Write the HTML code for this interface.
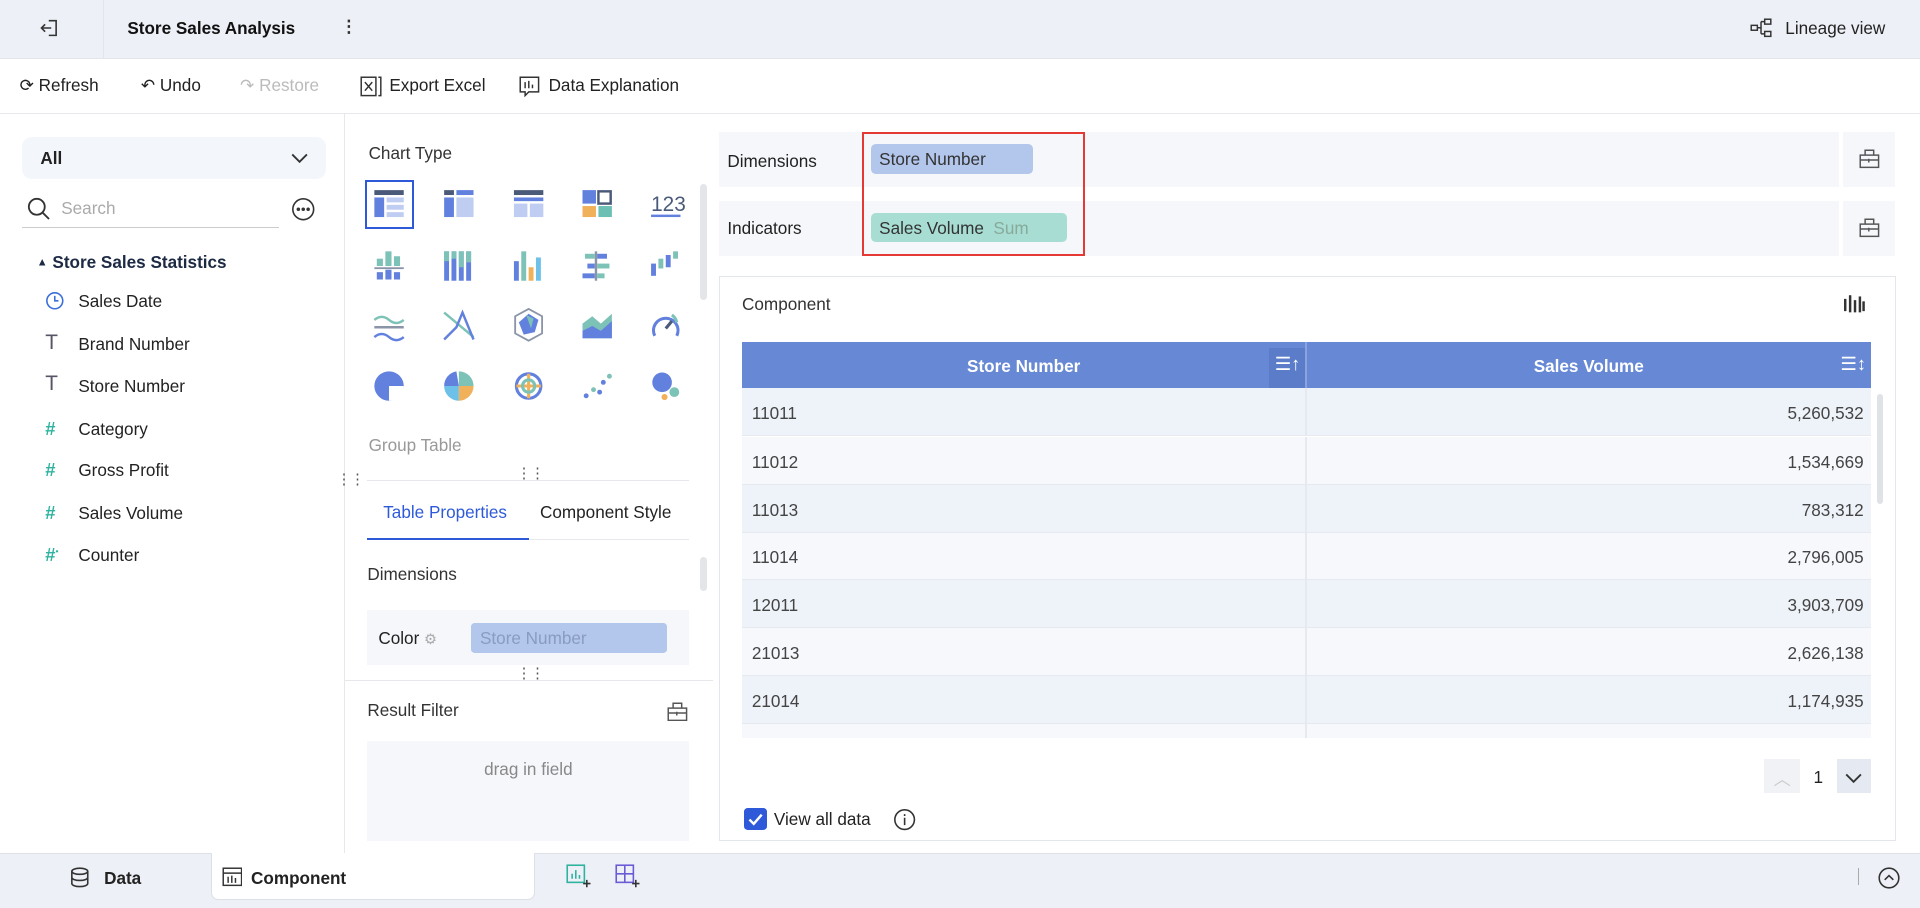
<!DOCTYPE html>
<html><head><meta charset="utf-8"><style>
*{box-sizing:border-box;margin:0;padding:0}
html,body{width:1920px;height:908px;overflow:hidden;background:#fff}
#r{width:1568px;height:742px;position:relative;zoom:1.2244898;font-family:"Liberation Sans",sans-serif;color:#222;font-size:14px}
.a{position:absolute}
.t{white-space:nowrap}
.fi{position:absolute;left:36px;font-size:14px;color:#222}
.ic{position:absolute;left:37px;color:#2fb3a0;font-size:15px;font-weight:bold}
.row{position:absolute;left:606px;width:922px;height:39px;border-bottom:1px solid #e6e9ef}
.row span{position:absolute;top:12px;font-size:14px;color:#444}
.row .n{right:6px}
.row b{position:absolute;display:block;left:460px;top:0;width:1px;height:39px;background:#e6e9ef}
</style></head><body><div id="r">
<!-- top bar -->
<div class="a" style="left:0;top:0;width:1568px;height:48px;background:#edf0f6;border-bottom:1px solid #e2e5ea"></div>
<div class="a" style="left:84px;top:0;width:1px;height:48px;background:#e2e5ea"></div>
<svg class="a" style="left:32px;top:14px" width="18" height="18" viewBox="0 0 18 18" fill="none" stroke="#333" stroke-width="1.3"><path d="M8 3h6v12H8M2 9h8M5 6L2 9l3 3"/></svg>
<div class="a t" style="left:104px;top:15px;font-weight:bold;font-size:14px;color:#111">Store Sales Analysis</div>
<div class="a t" style="left:278px;top:13px;font-weight:bold;color:#333">⋮</div>
<svg class="a" style="left:1429px;top:15px" width="20" height="16" viewBox="0 0 20 16" fill="none" stroke="#333" stroke-width="1.2"><rect x="1" y="6" width="5" height="4"/><rect x="12" y="1" width="5" height="4"/><rect x="12" y="11" width="5" height="4"/><path d="M6 8h3M9 3v10M9 3h3M9 13h3"/></svg>
<div class="a t" style="left:1458px;top:15px;font-size:14px">Lineage view</div>
<!-- toolbar -->
<div class="a" style="left:0;top:92px;width:1568px;height:1px;background:#e6e8ec"></div>
<div class="a t" style="left:16px;top:61px;font-size:14px">⟳ Refresh</div>
<div class="a t" style="left:115px;top:61px;font-size:14px">↶ Undo</div>
<div class="a t" style="left:196px;top:61px;font-size:14px;color:#bbb">↷ Restore</div>
<svg class="a" style="left:294px;top:62px" width="18" height="17" viewBox="0 0 18 17" fill="none" stroke="#333" stroke-width="1.2"><rect x="1" y="1" width="12" height="15"/><path d="M15 1h2v15h-2M4 5l6 7M10 5l-6 7"/></svg>
<div class="a t" style="left:318px;top:61px;font-size:14px">Export Excel</div>
<svg class="a" style="left:424px;top:62px" width="17" height="17" viewBox="0 0 17 17" fill="none" stroke="#333" stroke-width="1.2"><path d="M1 1h15v12H8l-3 3v-3H1z"/><path d="M5 5v5M8 4v6M11 7v3"/></svg>
<div class="a t" style="left:448px;top:61px;font-size:14px">Data Explanation</div>
<!-- left panel -->
<div class="a" style="left:281px;top:93px;width:1px;height:604px;background:#e6e8ec"></div>
<div class="a" style="left:18px;top:112px;width:248px;height:34px;background:#f3f6fb;border-radius:8px"></div>
<div class="a t" style="left:33px;top:121px;font-weight:bold">All</div>
<svg class="a" style="left:238px;top:124px" width="14" height="10" viewBox="0 0 14 10" fill="none" stroke="#333" stroke-width="1.5"><path d="M1 2l6 6 6-6"/></svg>
<svg class="a" style="left:22px;top:161px" width="20" height="20" viewBox="0 0 20 20" fill="none" stroke="#333" stroke-width="1.5"><circle cx="8" cy="8" r="6.5"/><path d="M13 13l5 5"/></svg>
<div class="a t" style="left:50px;top:162px;color:#aaa">Search</div>
<div class="a" style="left:18px;top:185px;width:210px;height:1px;background:#ccc"></div>
<svg class="a" style="left:238px;top:161px" width="20" height="20" viewBox="0 0 20 20" fill="none" stroke="#333" stroke-width="1.3"><circle cx="10" cy="10" r="8.5"/><circle cx="6" cy="10" r=".8" fill="#333"/><circle cx="10" cy="10" r=".8" fill="#333"/><circle cx="14" cy="10" r=".8" fill="#333"/></svg>
<div class="a t" style="left:30px;top:206px;font-weight:bold;font-size:14px;color:#1d2a44"><span style="font-size:9px;vertical-align:2px">▲</span> Store Sales Statistics</div>
<svg class="a" style="left:37px;top:238px" width="16" height="16" viewBox="0 0 16 16" fill="none" stroke="#3b6fd9" stroke-width="1.3"><circle cx="8" cy="8" r="6.5"/><path d="M8 4v4h3"/></svg>
<div class="fi t" style="left:64px;top:238px">Sales Date</div>
<div class="ic" style="color:#556;font-weight:normal;font-size:17px;top:270px">T</div><div class="fi t" style="left:64px;top:273px">Brand Number</div>
<div class="ic" style="color:#556;font-weight:normal;font-size:17px;top:304px">T</div><div class="fi t" style="left:64px;top:307px">Store Number</div>
<div class="ic" style="top:341px">#</div><div class="fi t" style="left:64px;top:342px">Category</div>
<div class="ic" style="top:375px">#</div><div class="fi t" style="left:64px;top:376px">Gross Profit</div>
<div class="ic" style="top:410px">#</div><div class="fi t" style="left:64px;top:411px">Sales Volume</div>
<div class="ic" style="top:444px">#<sup style="font-size:7px">•</sup></div><div class="fi t" style="left:64px;top:445px">Counter</div>
<div class="a t" style="left:275px;top:385px;font-size:12px;color:#555;letter-spacing:-1px">⋮⋮</div>
<!-- middle panel -->
<div class="a t" style="left:301px;top:117px;font-size:14px;color:#333">Chart Type</div>
<div class="a" style="left:572px;top:150px;width:5px;height:95px;background:#e3e5e8;border-radius:3px"></div>
<div class="a" style="left:298px;top:147px;width:40px;height:40px;border:2px solid #2e5ad9"></div>
<svg class="a" style="left:300px;top:150px" width="260" height="185" viewBox="0 0 260 185">
<g transform="translate(6,5)"><rect width="24" height="4" fill="#4a5a78"/><rect y="6" width="8" height="16" fill="#6280dd"/><rect x="10" y="6" width="14" height="4" fill="#c0cdf3"/><rect x="10" y="12" width="14" height="4" fill="#c0cdf3"/><rect x="10" y="18" width="14" height="4" fill="#c0cdf3"/></g>
<g transform="translate(63,5)"><rect width="8" height="4" fill="#4a5a78"/><rect x="10" width="14" height="4" fill="#6280dd"/><rect y="6" width="8" height="16" fill="#6280dd"/><rect x="10" y="6" width="14" height="16" fill="#c0cdf3"/></g>
<g transform="translate(120,5)"><rect width="24" height="4" fill="#4a5a78"/><rect y="6" width="24" height="3" fill="#6280dd"/><rect y="11" width="11" height="11" fill="#c0cdf3"/><rect x="13" y="11" width="11" height="11" fill="#c0cdf3"/></g>
<g transform="translate(176,5)"><rect width="11" height="11" fill="#6280dd"/><rect x="13" y="1" width="10" height="10" fill="none" stroke="#4a5a78" stroke-width="2"/><rect y="13" width="11" height="9" fill="#f0b15a"/><rect x="13" y="13" width="11" height="9" fill="#6cc0b3"/></g>
<text x="232" y="22" font-family="Liberation Sans" font-size="17" fill="#4a5a78">123</text><rect x="232" y="25" width="24" height="2" fill="#6280dd"/>
<g transform="translate(6,55)"><rect x="2" y="6" width="5" height="6" fill="#7dc2b6"/><rect x="9" y="0" width="5" height="12" fill="#7dc2b6"/><rect x="16" y="4" width="5" height="8" fill="#7dc2b6"/><rect y="13" width="24" height="1.5" fill="#8a95a8"/><rect x="2" y="17" width="5" height="6" fill="#6280dd"/><rect x="9" y="15" width="5" height="8" fill="#6280dd"/><rect x="16" y="17" width="5" height="6" fill="#6280dd"/></g>
<g transform="translate(63,55)"><rect x="0" y="0" width="4" height="24" fill="#6280dd"/><rect x="0" y="0" width="4" height="8" fill="#7dc2b6"/><rect x="6" y="0" width="4" height="24" fill="#6280dd"/><rect x="6" y="0" width="4" height="6" fill="#7dc2b6"/><rect x="12" y="0" width="4" height="24" fill="#6280dd"/><rect x="12" y="0" width="4" height="13" fill="#7dc2b6"/><rect x="18" y="0" width="4" height="24" fill="#6280dd"/><rect x="18" y="0" width="4" height="9" fill="#7dc2b6"/></g>
<g transform="translate(120,55)"><rect y="8" width="4" height="16" fill="#6280dd"/><rect x="6" y="0" width="4" height="24" fill="#7dc2b6"/><rect x="12" y="13" width="4" height="11" fill="#f0b15a"/><rect x="18" y="5" width="4" height="19" fill="#6dc0e8"/></g>
<g transform="translate(176,55)"><rect x="10" y="0" width="2" height="24" fill="#8a95a8"/><rect x="2" y="2" width="8" height="4" fill="#7dc2b6"/><rect x="12" y="2" width="8" height="4" fill="#6280dd"/><rect x="4" y="10" width="6" height="4" fill="#6280dd"/><rect x="12" y="10" width="10" height="4" fill="#7dc2b6"/><rect x="0" y="18" width="10" height="4" fill="#6280dd"/><rect x="12" y="18" width="6" height="4" fill="#7dc2b6"/></g>
<g transform="translate(232,55)"><rect y="10" width="4" height="10" fill="#6280dd"/><rect x="6" y="6" width="4" height="8" fill="#7dc2b6"/><rect x="12" y="3" width="4" height="10" fill="#6280dd"/><rect x="18" y="0" width="4" height="6" fill="#7dc2b6"/></g>
<g transform="translate(6,105)" fill="none" stroke-width="2"><path d="M0 6q6-5 12 0t12 0" stroke="#7dc2b6"/><path d="M0 12h24" stroke="#8a95a8"/><path d="M0 20q6-5 12 0t12 0" stroke="#6280dd"/></g>
<g transform="translate(63,103)" fill="none" stroke-width="2"><path d="M0 2l24 20" stroke="#7dc2b6"/><path d="M0 24l10-10 5-12 9 22" stroke="#6280dd"/></g>
<g transform="translate(120,102)"><path d="M12 0l11 6v14l-11 6-11-6V6z" fill="none" stroke="#8a95a8" stroke-width="1.5"/><path d="M12 4l8 5-3 10-9 2-4-10z" fill="#6280dd"/><path d="M10 5l6 3-2 8z" fill="#7dc2b6"/></g>
<g transform="translate(176,104)"><path d="M0 22V10l8-6 7 6 9-8v20z" fill="#7dc2b6"/><path d="M0 22v-6l8-4 7 4 9-8v14z" fill="#6280dd"/></g>
<g transform="translate(232,104)" fill="none" stroke-width="2.5"><path d="M3 20a10 10 0 1 1 18 0" stroke="#6280dd"/><path d="M12 14l5-6" stroke="#4a5a78"/><path d="M17 3a10 10 0 0 1 4 6" stroke="#7dc2b6"/></g>
<g transform="translate(6,153)"><circle cx="12" cy="12" r="12" fill="#6280dd"/><path d="M12 12h12a12 12 0 0 1-12 12z" fill="#fff"/><path d="M14 14h10a10 10 0 0 1-10 10z" fill="#fff"/></g>
<g transform="translate(63,153)"><path d="M12 12V0a12 12 0 0 1 12 12z" fill="#7dc2b6"/><path d="M12 12h12a12 12 0 0 1-12 12z" fill="#f0b15a"/><path d="M12 12v12A12 12 0 0 1 0 12z" fill="#6dc0e8"/><path d="M12 12H0A12 12 0 0 1 10 0z" fill="#6280dd"/></g>
<g transform="translate(120,153)" fill="none" stroke-width="2.5"><circle cx="12" cy="12" r="10" stroke="#6280dd"/><path d="M12 2v20M2 12h20" stroke="#f0b15a"/><circle cx="12" cy="12" r="5" stroke="#7dc2b6"/></g>
<g transform="translate(176,153)"><circle cx="3" cy="20" r="2" fill="#6280dd"/><circle cx="9" cy="15" r="2" fill="#7dc2b6"/><circle cx="14" cy="17" r="2" fill="#6280dd"/><circle cx="17" cy="9" r="2" fill="#6280dd"/><circle cx="22" cy="4" r="2" fill="#7dc2b6"/></g>
<g transform="translate(232,153)"><circle cx="9" cy="9" r="8" fill="#6280dd"/><circle cx="19" cy="17" r="4" fill="#7dc2b6"/><circle cx="11" cy="21" r="2.5" fill="#f0b15a"/></g>
</svg>
<div class="a t" style="left:301px;top:355px;color:#999">Group Table</div>
<div class="a t" style="left:422px;top:380px;font-size:12px;color:#555;letter-spacing:-1px">⋮⋮</div>
<div class="a" style="left:300px;top:392px;width:263px;height:1px;background:#e6e8ec"></div>
<div class="a t" style="left:313px;top:410px;color:#2e5ad9">Table Properties</div>
<div class="a t" style="left:441px;top:410px;color:#222">Component Style</div>
<div class="a" style="left:300px;top:440px;width:263px;height:1px;background:#e6e8ec"></div>
<div class="a" style="left:300px;top:439px;width:132px;height:2px;background:#2e5ad9"></div>
<div class="a t" style="left:300px;top:461px;color:#333">Dimensions</div>
<div class="a" style="left:572px;top:455px;width:5px;height:28px;background:#e3e5e8;border-radius:3px"></div>
<div class="a" style="left:300px;top:498px;width:263px;height:45px;background:#f5f7fa"></div>
<div class="a t" style="left:309px;top:513px">Color <span style="color:#aaa;font-size:12px">⚙</span></div>
<div class="a t" style="left:385px;top:509px;width:160px;height:24px;background:#b3c6ec;border-radius:3px;color:#8a9bc0;padding:4px 7px">Store Number</div>
<div class="a" style="left:282px;top:555px;width:300px;height:1px;background:#e6e8ec"></div>
<div class="a t" style="left:422px;top:543px;font-size:12px;color:#555;letter-spacing:-1px">⋮⋮</div>
<div class="a t" style="left:300px;top:572px;color:#333">Result Filter</div>
<svg class="a" style="left:545px;top:573px" width="17" height="16" viewBox="0 0 17 16" fill="none" stroke="#555" stroke-width="1.2"><rect x="1" y="5" width="15" height="10"/><path d="M5 5V1h7v4M1 9h15M8 8v3"/></svg>
<div class="a t" style="left:300px;top:605px;width:263px;height:82px;background:#f5f7fa;color:#888;text-align:center;padding-top:15px">drag in field</div>
<!-- right -->
<div class="a" style="left:587px;top:108px;width:915px;height:45px;background:#f5f7fa"></div>
<div class="a" style="left:1505px;top:108px;width:43px;height:45px;background:#f5f7fa"></div>
<div class="a" style="left:587px;top:164px;width:915px;height:45px;background:#f5f7fa"></div>
<div class="a" style="left:1505px;top:164px;width:43px;height:45px;background:#f5f7fa"></div>
<svg class="a" style="left:1518px;top:122px" width="17" height="16" viewBox="0 0 17 16" fill="none" stroke="#555" stroke-width="1.2"><rect x="1" y="5" width="15" height="10"/><path d="M5 5V1h7v4M1 9h15M8 8v3"/></svg>
<svg class="a" style="left:1518px;top:178px" width="17" height="16" viewBox="0 0 17 16" fill="none" stroke="#555" stroke-width="1.2"><rect x="1" y="5" width="15" height="10"/><path d="M5 5V1h7v4M1 9h15M8 8v3"/></svg>
<div class="a t" style="left:594px;top:123px">Dimensions</div>
<div class="a t" style="left:594px;top:178px">Indicators</div>
<div class="a t" style="left:711px;top:118px;width:133px;height:24px;background:#b3c6ec;border-radius:4px;padding:4px 7px;color:#333">Store Number</div>
<div class="a t" style="left:711px;top:174px;width:160px;height:24px;background:#a8ddd4;border-radius:4px;padding:4px 7px;color:#333">Sales Volume <span style="color:#8a9">&nbsp;Sum</span></div>
<div class="a" style="left:704px;top:108px;width:182px;height:101px;border:2px solid #e53935"></div>
<div class="a" style="left:587px;top:225px;width:961px;height:462px;border:1px solid #e3e6ea"></div>
<div class="a t" style="left:606px;top:240px;color:#333">Component</div>
<svg class="a" style="left:1506px;top:240px" width="17" height="16" viewBox="0 0 17 16" fill="#333"><rect x="0" y="4" width="2" height="10"/><rect x="4" y="1" width="2" height="14"/><rect x="8" y="5" width="2" height="10"/><rect x="12" y="2" width="2" height="13"/><rect x="15" y="6" width="2" height="8"/></svg>
<div class="a" style="left:606px;top:279px;width:922px;height:38px;background:#6788d4"></div>
<div class="a" style="left:1066px;top:279px;width:1px;height:38px;background:#8aa2de"></div>
<div class="a t" style="left:606px;top:291px;width:460px;text-align:center;color:#fff;font-weight:bold;font-size:14px">Store Number</div>
<div class="a t" style="left:1067px;top:291px;width:461px;text-align:center;color:#fff;font-weight:bold;font-size:14px">Sales Volume</div>
<div class="a" style="left:1036px;top:284px;width:30px;height:33px;background:#5a7cc9"></div>
<div class="a t" style="left:1041px;top:288px;color:#fff;font-size:15px">☰↑</div>
<div class="a t" style="left:1503px;top:288px;color:#fff;font-size:15px">☰↕</div>
<div class="row" style="top:317px;background:#eef2f9"><span style="left:8px">11011</span><b></b><span class="n">5,260,532</span></div>
<div class="row" style="top:357px;background:#f6f8fc"><span style="left:8px">11012</span><b></b><span class="n">1,534,669</span></div>
<div class="row" style="top:396px;background:#eef2f9"><span style="left:8px">11013</span><b></b><span class="n">783,312</span></div>
<div class="row" style="top:435px;background:#f6f8fc"><span style="left:8px">11014</span><b></b><span class="n">2,796,005</span></div>
<div class="row" style="top:474px;background:#eef2f9"><span style="left:8px">12011</span><b></b><span class="n">3,903,709</span></div>
<div class="row" style="top:513px;background:#f6f8fc"><span style="left:8px">21013</span><b></b><span class="n">2,626,138</span></div>
<div class="row" style="top:552px;background:#eef2f9"><span style="left:8px">21014</span><b></b><span class="n">1,174,935</span></div>
<div class="row" style="top:591px;height:12px;background:#f6f8fc;border:none"><b style="height:12px"></b></div>
<div class="a" style="left:1533px;top:322px;width:5px;height:90px;background:#dfe2e6;border-radius:3px"></div>
<div class="a" style="left:1441px;top:620px;width:29px;height:28px;background:#f0f2f5;color:#ccc;text-align:center;padding-top:5px">︿</div>
<div class="a t" style="left:1481px;top:626px">1</div>
<div class="a" style="left:1500px;top:620px;width:28px;height:28px;background:#e4e9f2;text-align:center;padding-top:7px">
<svg width="14" height="10" viewBox="0 0 14 10" fill="none" stroke="#333" stroke-width="1.5"><path d="M1 2l6 6 6-6"/></svg></div>
<div class="a" style="left:608px;top:660px;width:18px;height:18px;background:#2e5ad9;border-radius:3px"></div>
<svg class="a" style="left:610px;top:662px" width="14" height="14" viewBox="0 0 14 14" fill="none" stroke="#fff" stroke-width="2"><path d="M2 7l3.5 3.5L12 3"/></svg>
<div class="a t" style="left:632px;top:661px">View all data</div>
<svg class="a" style="left:729px;top:660px" width="19" height="19" viewBox="0 0 19 19" fill="none" stroke="#333" stroke-width="1.3"><circle cx="9.5" cy="9.5" r="8"/><path d="M9.5 8v6M9.5 5v1.5"/></svg>
<!-- bottom -->
<div class="a" style="left:0;top:697px;width:1568px;height:45px;background:#edf0f6;border-top:1px solid #dde1e7"></div>
<svg class="a" style="left:57px;top:708px" width="16" height="17" viewBox="0 0 16 17" fill="none" stroke="#333" stroke-width="1.3"><ellipse cx="8" cy="3.5" rx="6.5" ry="2.5"/><path d="M1.5 3.5v10c0 1.4 2.9 2.5 6.5 2.5s6.5-1.1 6.5-2.5v-10M1.5 8.5c0 1.4 2.9 2.5 6.5 2.5s6.5-1.1 6.5-2.5"/></svg>
<div class="a t" style="left:85px;top:709px;font-weight:bold">Data</div>
<div class="a" style="left:172px;top:697px;width:265px;height:38px;background:#fff;border:1px solid #dde1e7;border-top:none;border-radius:0 0 6px 6px"></div>
<svg class="a" style="left:181px;top:708px" width="17" height="16" viewBox="0 0 17 16" fill="none" stroke="#333" stroke-width="1.2"><rect x="1" y="1" width="15" height="14"/><path d="M1 5h15M5 8v5M8 7v6M11 9v4"/></svg>
<div class="a t" style="left:205px;top:709px;font-weight:bold">Component</div>
<svg class="a" style="left:462px;top:706px" width="22" height="20" viewBox="0 0 22 20" fill="none" stroke-width="1.3"><rect x="1" y="1" width="14" height="14" stroke="#2fb3a0"/><path d="M5 12V8M8 12V5M11 12V9" stroke="#2fb3a0"/><path d="M17 13v6M14 16h6" stroke="#333"/></svg>
<svg class="a" style="left:502px;top:706px" width="22" height="20" viewBox="0 0 22 20" fill="none" stroke-width="1.3"><rect x="1" y="1" width="14" height="14" stroke="#6b5bd6"/><path d="M1 8h14M8 1v14" stroke="#6b5bd6"/><path d="M17 13v6M14 16h6" stroke="#333"/></svg>
<div class="a" style="left:1517px;top:709px;width:1px;height:14px;background:#aaa"></div>
<svg class="a" style="left:1534px;top:708px" width="18" height="18" viewBox="0 0 18 18" fill="none" stroke="#333" stroke-width="1.3"><circle cx="9" cy="9" r="8"/><path d="M5.5 10.5L9 7l3.5 3.5"/></svg>
</div></body></html>
